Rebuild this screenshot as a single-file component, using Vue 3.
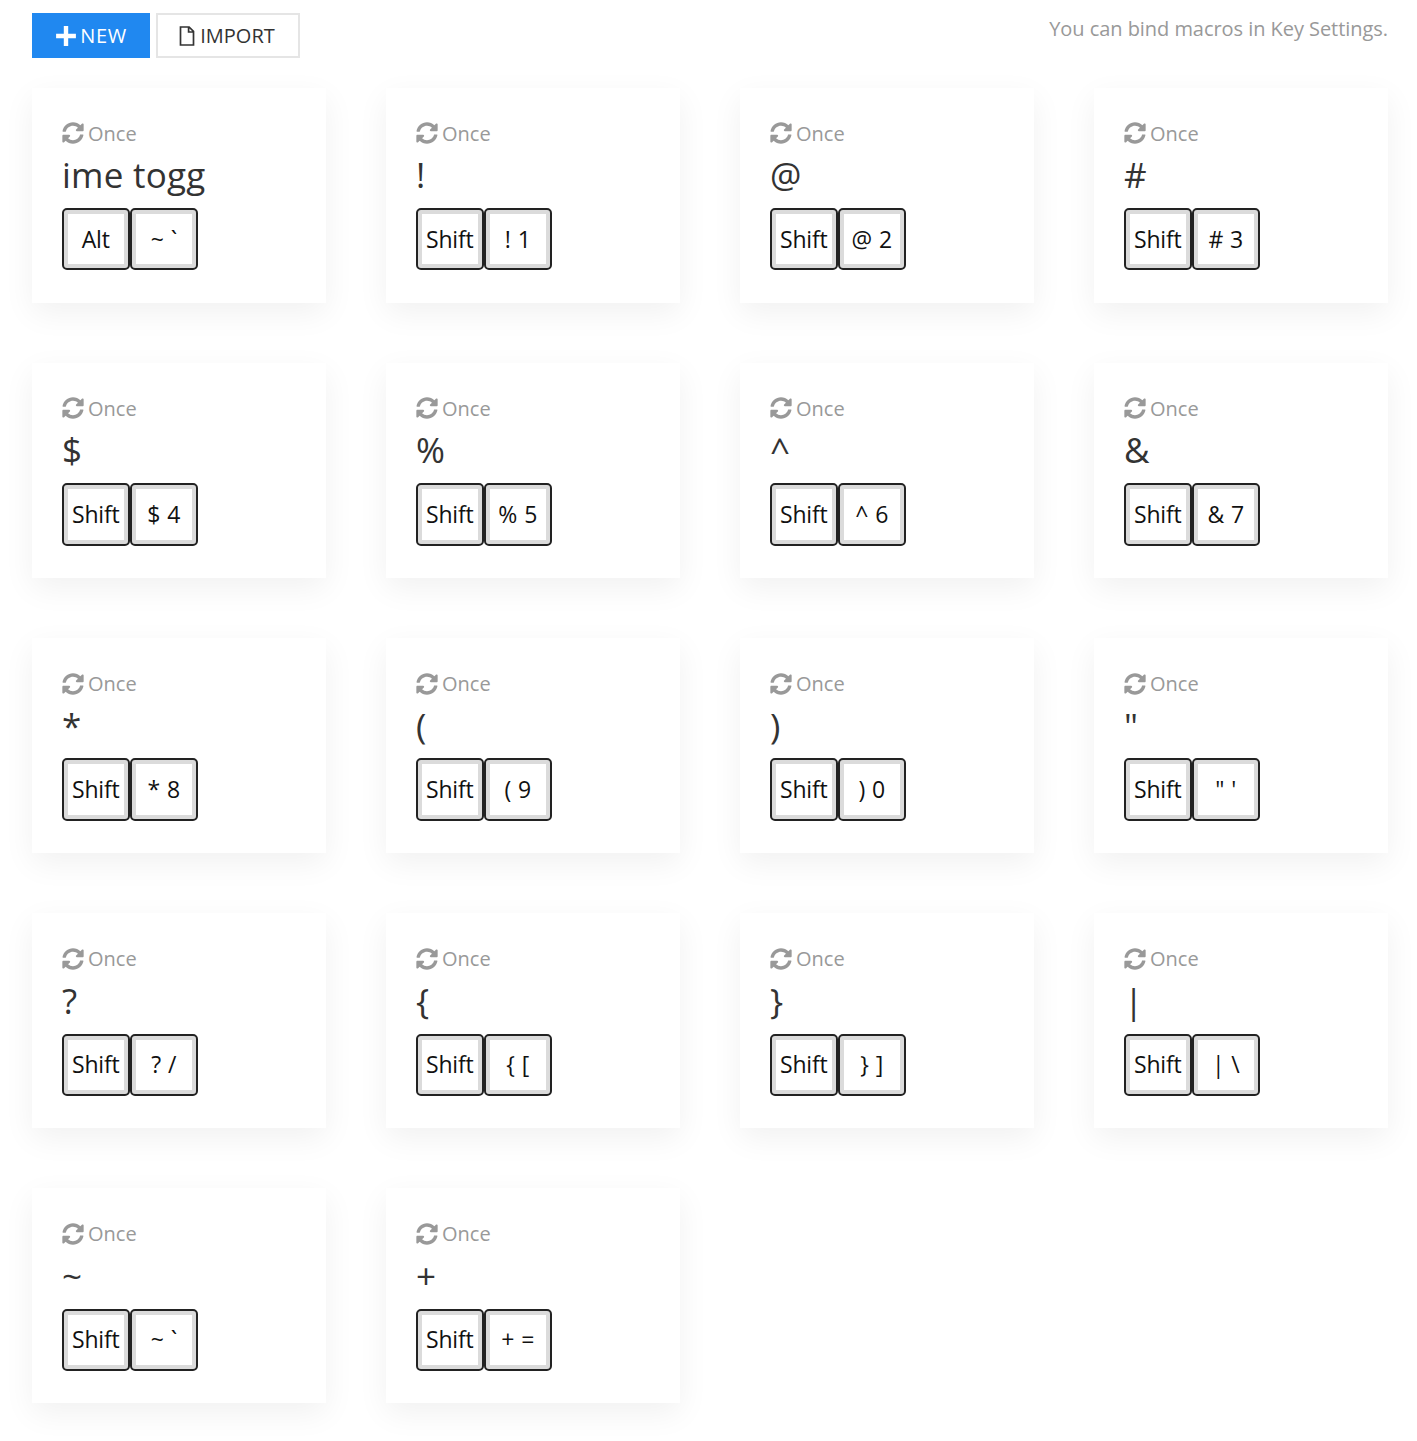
<template>
  <div class="page">
    <div class="toolbar">
      <div class="actions">
        <button class="btn primary">
          <svg class="plus" viewBox="0 0 20 20"><path d="M8 1h4v7h7v4h-7v7H8v-7H1V8h7z" /></svg>
          <span>NEW</span>
        </button>
        <button class="btn outline">
          <svg class="file" viewBox="0 0 16 20"><path d="M1.5 1h8.6L14.5 5.4V19h-13zM9.6 1.4V6h4.6" /></svg>
          <span>IMPORT</span>
        </button>
      </div>
      <p class="hint">You can bind macros in Key Settings.</p>
    </div>

    <div class="grid">
      <div v-for="macro in macros" :key="macro.title" class="card">
        <div class="mode">
          <svg class="sync" viewBox="0 0 512 512"><path :d="SYNC_PATH" /></svg>
          <span>Once</span>
        </div>
        <div class="title">{{ macro.title }}</div>
        <div class="keys">
          <div class="key">{{ macro.mod }}</div>
          <div class="key">
            <span v-for="(part, i) in macro.key" :key="i">{{ part }}</span>
          </div>
        </div>
      </div>
    </div>
  </div>
</template>

<script setup>
const SYNC_PATH = 'M370.72 133.28C339.458 104.008 298.888 87.962 255.848 88c-77.458.068-144.328 53.178-162.791 126.85-1.344 5.363-6.122 9.15-11.651 9.15H24.103c-7.498 0-13.194-6.807-11.807-14.176C33.933 94.924 134.813 8 256 8c66.448 0 126.791 26.136 171.315 68.685L463.03 40.97C478.149 25.851 504 36.559 504 57.941V192c0 13.255-10.745 24-24 24H345.941c-21.382 0-32.09-25.851-16.971-40.971l41.75-41.749zM32 296h134.059c21.382 0 32.09 25.851 16.971 40.971l-41.75 41.75c31.262 29.273 71.835 45.319 114.876 45.28 77.418-.07 144.315-53.144 162.787-126.849 1.344-5.363 6.122-9.15 11.651-9.15h57.304c7.498 0 13.194 6.807 11.807 14.176C478.067 417.076 377.187 504 256 504c-66.448 0-126.791-26.136-171.315-68.685L48.97 471.03C33.851 486.149 8 475.441 8 454.059V320c0-13.255 10.745-24 24-24z';

const macros = [
  { title: 'ime togg', mod: 'Alt', key: ['~', '`'] },
  { title: '!', mod: 'Shift', key: ['!', '1'] },
  { title: '@', mod: 'Shift', key: ['@', '2'] },
  { title: '#', mod: 'Shift', key: ['#', '3'] },
  { title: '$', mod: 'Shift', key: ['$', '4'] },
  { title: '%', mod: 'Shift', key: ['%', '5'] },
  { title: '^', mod: 'Shift', key: ['^', '6'] },
  { title: '&', mod: 'Shift', key: ['&', '7'] },
  { title: '*', mod: 'Shift', key: ['*', '8'] },
  { title: '(', mod: 'Shift', key: ['(', '9'] },
  { title: ')', mod: 'Shift', key: [')', '0'] },
  { title: '"', mod: 'Shift', key: ['"', "'"] },
  { title: '?', mod: 'Shift', key: ['?', '/'] },
  { title: '{', mod: 'Shift', key: ['{', '['] },
  { title: '}', mod: 'Shift', key: ['}', ']'] },
  { title: '|', mod: 'Shift', key: ['|', '\\'] },
  { title: '~', mod: 'Shift', key: ['~', '`'] },
  { title: '+', mod: 'Shift', key: ['+', '='] }
];
</script>

<style>
body {
  background: #fff;
}
</style>

<style scoped>
.page {
  padding: 13px 29px 37px 32px;
  font-family: "Open Sans", "Noto Sans", sans-serif;
  color: #333;
}
.toolbar {
  display: flex;
  justify-content: space-between;
  align-items: flex-start;
  height: 45px;
}
.actions {
  display: flex;
  gap: 6px;
}
.btn {
  display: flex;
  align-items: center;
  justify-content: center;
  height: 45px;
  padding: 0;
  font-family: inherit;
  font-size: 20px;
}
.primary {
  width: 118px;
  gap: 3px;
  background: #2088f0;
  border: 0;
  color: #fff;
  letter-spacing: 0.6px;
}
.outline {
  width: 144px;
  gap: 5px;
  padding-right: 2px;
  background: #fff;
  border: 2px solid #e5e5e5;
  color: #333;
}
.plus {
  width: 22px;
  height: 22px;
  fill: #fff;
}
.file {
  width: 16px;
  height: 20px;
  fill: none;
  stroke: #333;
  stroke-width: 1.7;
}
.hint {
  margin: 2px 0 0;
  font-size: 20px;
  line-height: 27px;
  letter-spacing: -0.05px;
  color: #999;
}
.grid {
  display: grid;
  grid-template-columns: repeat(4, 294px);
  justify-content: space-between;
  row-gap: 60.2px;
  margin-top: 29.6px;
}
.card {
  height: 215px;
  box-sizing: border-box;
  padding: 30.6px 30px 0;
  background: #fff;
  box-shadow: 0 10px 30px rgba(0, 0, 0, 0.06);
}
.mode {
  display: flex;
  align-items: center;
  gap: 4px;
  height: 30px;
  font-size: 20px;
  color: #999;
}
.sync {
  width: 22px;
  height: 22px;
  fill: #999;
}
.title {
  height: 59.8px;
  font-size: 35px;
  line-height: 54px;
  letter-spacing: 0.25px;
}
.keys {
  display: flex;
  gap: 0.5px;
}
.key {
  display: flex;
  align-items: center;
  justify-content: center;
  gap: 7px;
  width: 67.5px;
  height: 62.4px;
  padding-bottom: 1px;
  box-sizing: border-box;
  border: 2px solid #222;
  border-radius: 5px;
  box-shadow: inset 0 0 0 4px #dbdbdb;
  background: #fff;
  font-size: 23px;
  letter-spacing: -0.2px;
  color: #111;
}
</style>
